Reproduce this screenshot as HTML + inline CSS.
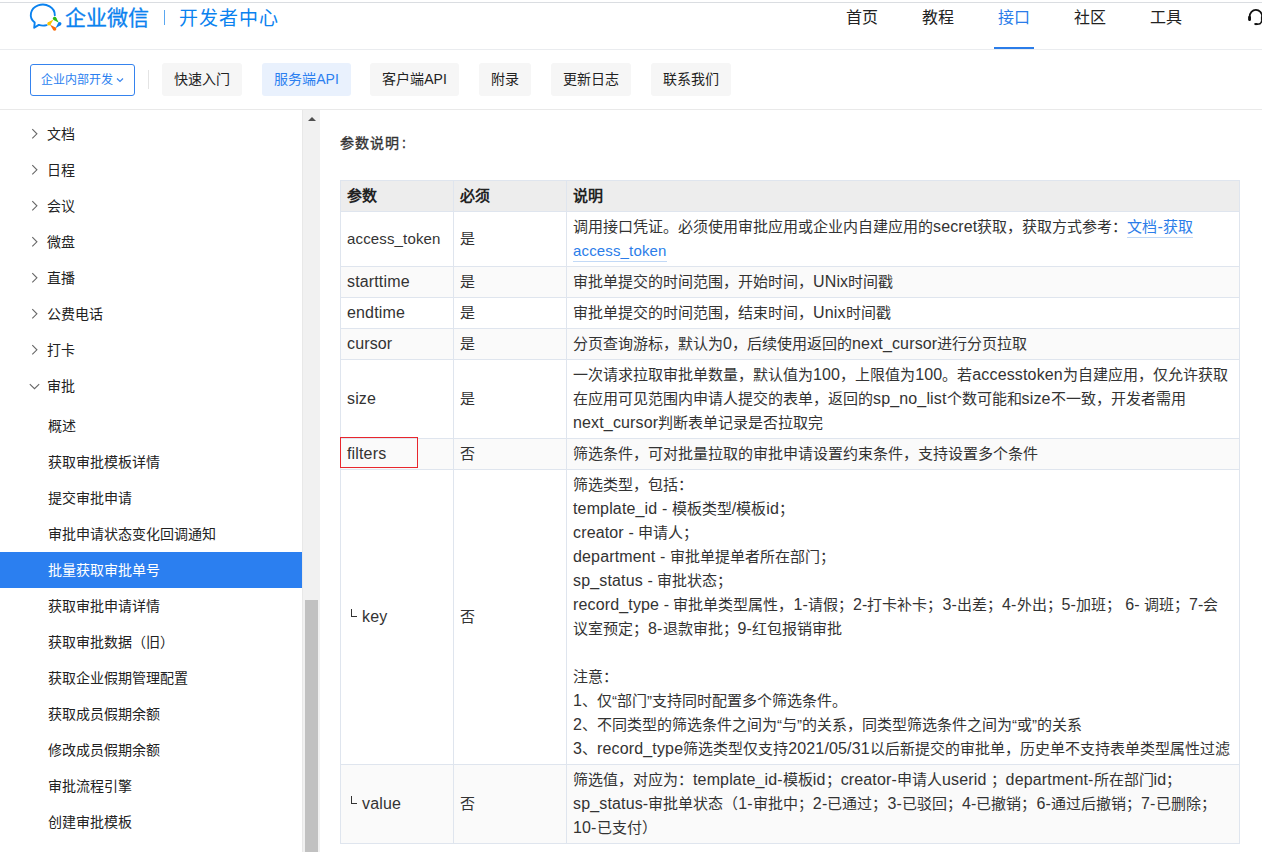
<!DOCTYPE html>
<html lang="zh-CN"><head><meta charset="utf-8">
<style>
*{box-sizing:border-box;margin:0;padding:0}
html,body{width:1262px;height:852px;overflow:hidden;background:#fff}
body{font-family:"Liberation Sans",sans-serif;color:#333;position:relative}
.abs{position:absolute}
#topline{left:0;top:2px;width:1262px;height:1px;background:#dadde1}
#hdr-b{left:0;top:49px;width:1262px;height:1px;background:#eaecef}
#sub-b{left:0;top:109px;width:1262px;height:1px;background:#e9e9e9}
.logo-t{color:#0a82ef;font-size:21px;top:4px;line-height:26px;white-space:nowrap}
.nav{top:7px;font-size:16px;line-height:22px;color:#222;white-space:nowrap}
.nav.on{color:#2b7de9}
#uline{left:994px;top:47px;width:40px;height:2px;background:#2b7de9}
#drop{left:30px;top:64px;width:105px;height:32px;border:1px solid #3583ee;border-radius:3px;color:#2b7ff0;font-size:12px;line-height:30px;padding-left:10px;white-space:nowrap}
#sep{left:148px;top:70px;width:1px;height:19px;background:#e4e4e4}
.tab{top:63px;height:33px;border-radius:3px;background:#f6f6f6;font-size:14px;line-height:33px;text-align:center;color:#222;white-space:nowrap}
.tab.on{background:#e9f1fd;color:#2b7ff0}
.side{font-size:14px;line-height:20px;color:#222;white-space:nowrap}
#active{left:0;top:552px;width:302px;height:36px;background:#2b7ff0}
#track{left:302px;top:110px;width:18px;height:742px;background:#f1f1f1;border-left:1px solid #e8e8e8}
#thumb{left:305px;top:600px;width:13px;height:252px;background:#c1c1c1}
#arrow{left:308px;top:117px;width:0;height:0;border-left:4px solid transparent;border-right:4px solid transparent;border-bottom:4px solid #505050}
#ptitle{left:340px;top:132px;font-size:14px;letter-spacing:1px;-webkit-text-stroke:0.35px #333;line-height:22px;color:#333;white-space:nowrap}
#tbl{left:340px;top:180px;width:899px;border-collapse:collapse;table-layout:fixed;font-size:15px;color:#333}
#tbl td,#tbl th{border:1px solid #dfe5ee;padding:3px 6px;line-height:24px;font-size:15px;letter-spacing:0;white-space:nowrap;vertical-align:middle;text-align:left}
#tbl td{padding:3px 6px 3px}
#tbl th{font-weight:bold;background:#ededed;color:#222}
#tbl tr.st td{background:#fafafa}
#tbl a{color:#2b7de9;text-decoration:none;border-bottom:1px solid #c2d9f6;padding-bottom:2px}
.fbox{position:relative}
#tbl .l{font-size:16px;letter-spacing:0.15px;line-height:1}
.corner{display:inline-block;width:6px;height:8px;border-left:1px solid #333;border-bottom:1px solid #333;margin:0 5px 0 4px;vertical-align:5px}
</style></head><body>
<div class="abs" id="topline"></div>
<!-- logo -->
<svg class="abs" style="left:26px;top:0px" width="40" height="32" viewBox="0 0 40 32">
<path d="M28.8 15.2A12 10.4 0 1 0 8.7 22.6L8.2 27.8L12.8 24.9A12 10.4 0 0 0 20.7 25.1" fill="none" stroke="#0a82ef" stroke-width="1.9" stroke-linecap="round" stroke-linejoin="round"/>
<circle cx="28.60" cy="18.50" r="1.75" fill="#2dbb18"/><path d="M27.35 19.73L32.86 22.84L29.85 17.27Z" fill="#2dbb18"/><circle cx="33.70" cy="23.70" r="1.75" fill="#0a7ff0"/><path d="M32.44 22.49L29.43 28.14L34.96 24.91Z" fill="#0a7ff0"/><circle cx="28.60" cy="29.00" r="1.75" fill="#fb6a08"/><path d="M29.80 27.73L23.87 24.52L27.40 30.27Z" fill="#fb6a08"/><circle cx="23.00" cy="23.70" r="1.75" fill="#fbc400"/><path d="M24.19 24.98L27.72 19.32L21.81 22.42Z" fill="#fbc400"/>
</svg>
<div class="abs logo-t" style="left:65px;top:5px;-webkit-text-stroke:0.3px #0a82ef">企业微信</div>
<div class="abs" style="left:164px;top:10px;width:1px;height:15px;background:#5aa7f0"></div>
<div class="abs logo-t" style="left:179px;top:6px;font-size:19px;letter-spacing:1px">开发者中心</div>

<div class="abs nav" style="left:846px">首页</div>
<div class="abs nav" style="left:922px">教程</div>
<div class="abs nav on" style="left:998px">接口</div>
<div class="abs nav" style="left:1074px">社区</div>
<div class="abs nav" style="left:1150px">工具</div>
<div class="abs" id="uline"></div>
<svg class="abs" style="left:1240px;top:0px" width="22" height="32" viewBox="0 0 22 32">
  <path d="M9.6 16.8A6.3 6.9 0 0 1 22.2 16.8" fill="none" stroke="#111" stroke-width="1.7"/>
  <rect x="8.1" y="15.9" width="2.9" height="5" rx="1.1" fill="#111"/>
  <rect x="20.9" y="15.9" width="2.9" height="5" rx="1.1" fill="#111"/>
  <path d="M15.3 24.2H17.6Q21.5 24.2 21.7 20.2" fill="none" stroke="#111" stroke-width="1.5"/>
  <ellipse cx="16" cy="24.1" rx="1.9" ry="1.1" fill="#111"/>
</svg>
<div class="abs" id="hdr-b"></div>

<div class="abs" id="drop">企业内部开发 <svg width="8" height="6" viewBox="0 0 8 6" style="vertical-align:1px"><path d="M1 1.5l3 3 3-3" fill="none" stroke="#3a86ee" stroke-width="1.2"/></svg></div>
<div class="abs" id="sep"></div>
<div class="abs tab" style="left:162px;width:80px">快速入门</div>
<div class="abs tab on" style="left:262px;width:89px">服务端API</div>
<div class="abs tab" style="left:370px;width:89px">客户端API</div>
<div class="abs tab" style="left:479px;width:52px">附录</div>
<div class="abs tab" style="left:551px;width:80px">更新日志</div>
<div class="abs tab" style="left:651px;width:80px">联系我们</div>
<div class="abs" id="sub-b"></div>

<!-- SIDEBAR -->
<div class="abs" id="track"></div><div class="abs" id="thumb"></div><div class="abs" id="arrow"></div>
<div class="abs" id="active"></div>
<svg class="abs" style="left:31px;top:128px" width="8" height="12" viewBox="0 0 8 12"><path d="M1.3 1.2L5.9 5.8L1.3 10.4" fill="none" stroke="#666" stroke-width="1.1"/></svg>
<div class="abs side" style="left:47px;top:124px">文档</div>
<svg class="abs" style="left:31px;top:164px" width="8" height="12" viewBox="0 0 8 12"><path d="M1.3 1.2L5.9 5.8L1.3 10.4" fill="none" stroke="#666" stroke-width="1.1"/></svg>
<div class="abs side" style="left:47px;top:160px">日程</div>
<svg class="abs" style="left:31px;top:200px" width="8" height="12" viewBox="0 0 8 12"><path d="M1.3 1.2L5.9 5.8L1.3 10.4" fill="none" stroke="#666" stroke-width="1.1"/></svg>
<div class="abs side" style="left:47px;top:196px">会议</div>
<svg class="abs" style="left:31px;top:236px" width="8" height="12" viewBox="0 0 8 12"><path d="M1.3 1.2L5.9 5.8L1.3 10.4" fill="none" stroke="#666" stroke-width="1.1"/></svg>
<div class="abs side" style="left:47px;top:232px">微盘</div>
<svg class="abs" style="left:31px;top:272px" width="8" height="12" viewBox="0 0 8 12"><path d="M1.3 1.2L5.9 5.8L1.3 10.4" fill="none" stroke="#666" stroke-width="1.1"/></svg>
<div class="abs side" style="left:47px;top:268px">直播</div>
<svg class="abs" style="left:31px;top:308px" width="8" height="12" viewBox="0 0 8 12"><path d="M1.3 1.2L5.9 5.8L1.3 10.4" fill="none" stroke="#666" stroke-width="1.1"/></svg>
<div class="abs side" style="left:47px;top:304px">公费电话</div>
<svg class="abs" style="left:31px;top:344px" width="8" height="12" viewBox="0 0 8 12"><path d="M1.3 1.2L5.9 5.8L1.3 10.4" fill="none" stroke="#666" stroke-width="1.1"/></svg>
<div class="abs side" style="left:47px;top:340px">打卡</div>
<svg class="abs" style="left:29px;top:383px" width="11" height="7" viewBox="0 0 11 7"><path d="M0.8 1.2l4.7 4.5 4.7-4.5" fill="none" stroke="#666" stroke-width="1.1"/></svg>
<div class="abs side" style="left:47px;top:376px">审批</div>
<div class="abs side" style="left:48px;top:416px">概述</div>
<div class="abs side" style="left:48px;top:452px">获取审批模板详情</div>
<div class="abs side" style="left:48px;top:488px">提交审批申请</div>
<div class="abs side" style="left:48px;top:524px">审批申请状态变化回调通知</div>
<div class="abs side" style="left:48px;top:560px;color:#fff">批量获取审批单号</div>
<div class="abs side" style="left:48px;top:596px">获取审批申请详情</div>
<div class="abs side" style="left:48px;top:632px">获取审批数据（旧）</div>
<div class="abs side" style="left:48px;top:668px">获取企业假期管理配置</div>
<div class="abs side" style="left:48px;top:704px">获取成员假期余额</div>
<div class="abs side" style="left:48px;top:740px">修改成员假期余额</div>
<div class="abs side" style="left:48px;top:776px">审批流程引擎</div>
<div class="abs side" style="left:48px;top:812px">创建审批模板</div>

<!-- CONTENT -->
<div class="abs" id="ptitle">参数说明<span style="margin-left:2px">:</span></div>
<table class="abs" id="tbl"><colgroup><col style="width:113px"><col style="width:113px"><col style="width:673px"></colgroup>
<tr class="th"><th>参数</th><th>必须</th><th>说明</th></tr>
<tr><td><span class="l" style="font-size:15px">access_token</span></td><td>是</td><td>调用接口凭证。必须使用审批应用或企业内自建应用的<span class="l">secret</span>获取，获取方式参考：<a>文档<span class="l">-</span>获取<br><span class="l" style="font-size:15px">access_token</span></a></td></tr>
<tr class="st"><td><span class="l">starttime</span></td><td>是</td><td>审批单提交的时间范围，开始时间，<span class="l">UNix</span>时间戳</td></tr>
<tr><td><span class="l">endtime</span></td><td>是</td><td>审批单提交的时间范围，结束时间，<span class="l">Unix</span>时间戳</td></tr>
<tr class="st"><td><span class="l">cursor</span></td><td>是</td><td>分页查询游标，默认为<span class="l">0</span>，后续使用返回的<span class="l">next_cursor</span>进行分页拉取</td></tr>
<tr><td><span class="l">size</span></td><td>是</td><td>一次请求拉取审批单数量，默认值为<span class="l">100</span>，上限值为<span class="l">100</span>。若<span class="l">accesstoken</span>为自建应用，仅允许获取<br>在应用可见范围内申请人提交的表单，返回的<span class="l">sp_no_list</span>个数可能和<span class="l">size</span>不一致，开发者需用<br><span class="l">next_cursor</span>判断表单记录是否拉取完</td></tr>
<tr class="st"><td><span class="fbox"><span class="l">filters</span></span></td><td>否</td><td>筛选条件，可对批量拉取的审批申请设置约束条件，支持设置多个条件</td></tr>
<tr><td><span class="corner"></span><span class="l">key</span></td><td>否</td><td>筛选类型，包括：<br><span class="l">template_id -</span> 模板类型<span class="l">/</span>模板<span class="l">id</span>；<br><span class="l">creator -</span> 申请人；<br><span class="l">department -</span> 审批单提单者所在部门；<br><span class="l">sp_status -</span> 审批状态；<br><span class="l">record_type -</span> 审批单类型属性，<span class="l">1-</span>请假；<span class="l">2-</span>打卡补卡；<span class="l">3-</span>出差；<span class="l">4-</span>外出；<span class="l">5-</span>加班； <span class="l">6-</span> 调班；<span class="l">7-</span>会<br>议室预定；<span class="l">8-</span>退款审批；<span class="l">9-</span>红包报销审批<br>&nbsp;<br>注意：<br><span class="l">1</span>、仅“部门”支持同时配置多个筛选条件。<br><span class="l">2</span>、不同类型的筛选条件之间为“与”的关系，同类型筛选条件之间为“或”的关系<br><span class="l">3</span>、<span class="l">record_type</span>筛选类型仅支持<span class="l">2021/05/31</span>以后新提交的审批单，历史单不支持表单类型属性过滤</td></tr>
<tr class="st"><td><span class="corner"></span><span class="l">value</span></td><td>否</td><td>筛选值，对应为：<span class="l">template_id-</span>模板<span class="l">id</span>；<span class="l">creator-</span>申请人<span class="l">userid</span> ；<span class="l">department-</span>所在部门<span class="l">id</span>；<br><span class="l">sp_status-</span>审批单状态（<span class="l">1-</span>审批中；<span class="l">2-</span>已通过；<span class="l">3-</span>已驳回；<span class="l">4-</span>已撤销；<span class="l">6-</span>通过后撤销；<span class="l">7-</span>已删除；<br><span class="l">10-</span>已支付）</td></tr>
</table>
<div class="abs" style="left:340px;top:437px;width:78px;height:31px;border:1px solid #e8262d"></div>
</body></html>
